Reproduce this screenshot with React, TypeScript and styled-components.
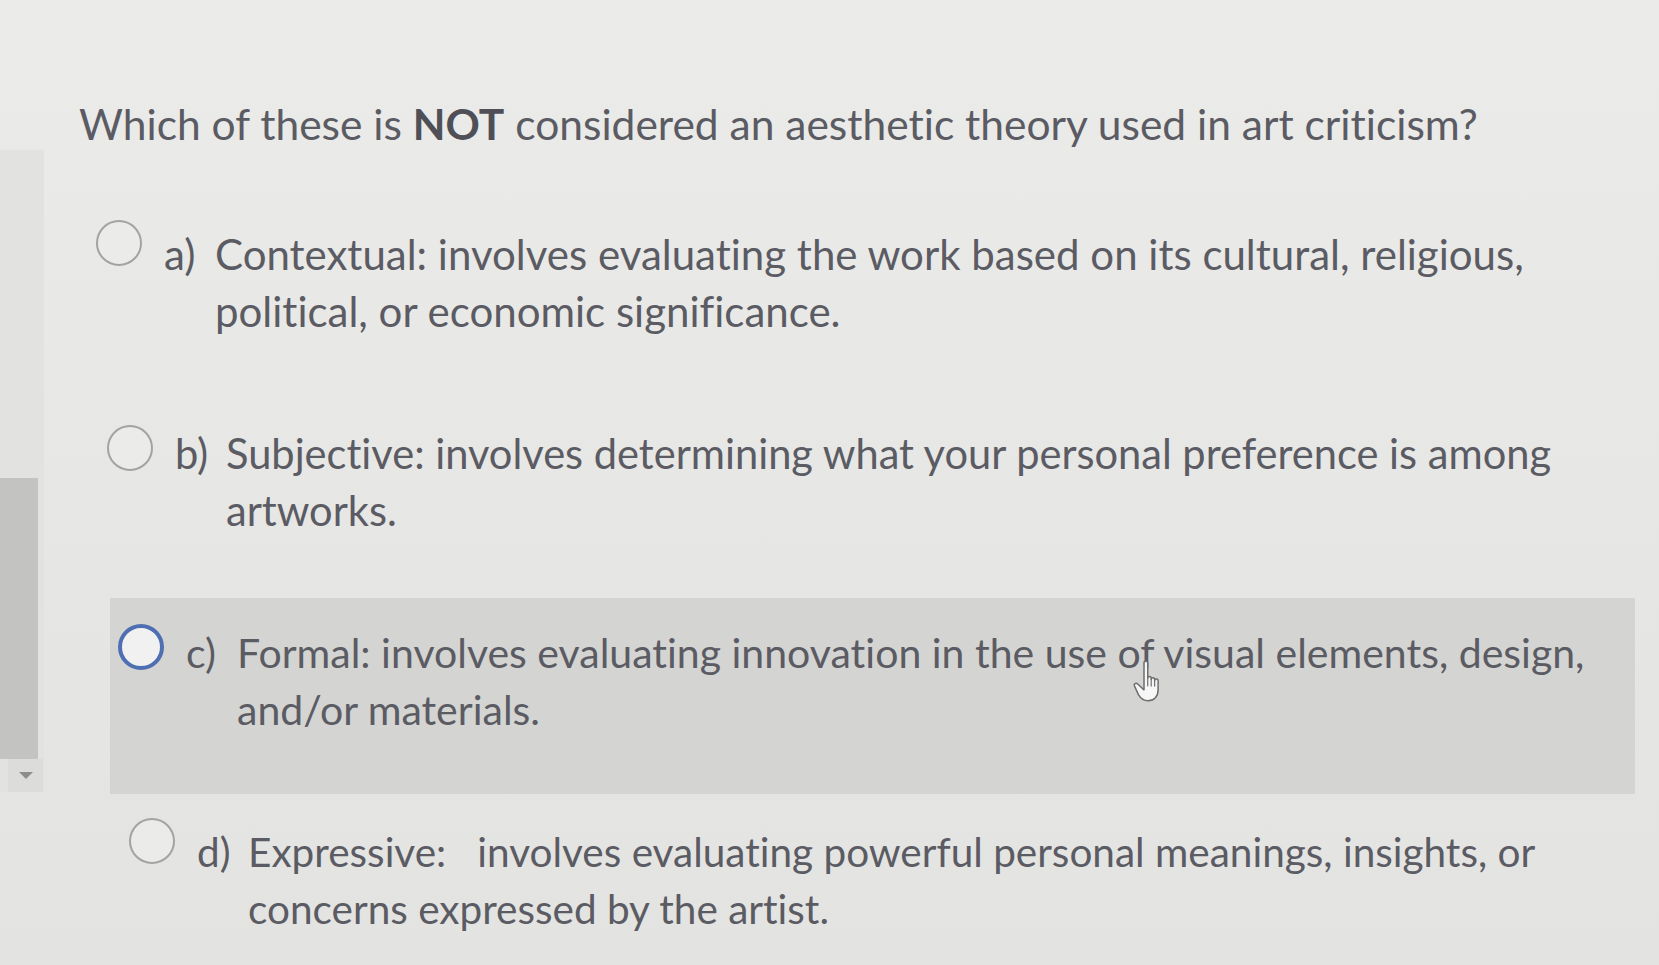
import React from 'react';
import styled, { createGlobalStyle } from 'styled-components';

const GlobalStyle = createGlobalStyle`
  html, body {
    margin: 0;
    padding: 0;
    background: #e7e7e5;
  }
  body {
    font-family: Lato, "Open Sans", sans-serif;
    color: #5b5b63;
    font-variant-ligatures: none;
  }
`;

const Page = styled.div`
  position: relative;
  display: flex;
  width: 1659px;
  height: 965px;
  overflow: hidden;
  background: linear-gradient(180deg, #ebebe9 0%, #e6e6e4 60%, #e3e3e1 100%);
`;

const ScrollColumn = styled.div`
  width: 44px;
  flex: 0 0 44px;
  display: flex;
  flex-direction: column;
`;

const Track = styled.div`
  margin-top: 150px;
  height: 642px;
  background: #e2e2e0;
  display: flex;
  flex-direction: column;
`;

const Thumb = styled.div`
  margin-top: 328px;
  margin-right: 6px;
  height: 281px;
  background: #c3c3c1;
`;

const ArrowBox = styled.div`
  height: 33px;
  margin-left: 8px;
  margin-right: 1px;
  background: #dcdcda;
  display: flex;
  align-items: center;
  justify-content: center;
`;

const ArrowDown = styled.div`
  width: 0;
  height: 0;
  border-left: 7px solid transparent;
  border-right: 7px solid transparent;
  border-top: 7px solid #8d8d8d;
`;

const Content = styled.div`
  flex: 1;
  padding-top: 98px;
  display: flex;
  flex-direction: column;
`;

const Question = styled.h1`
  margin: 0 0 51px 35px;
  font-size: 42.5px;
  font-weight: 400;
  line-height: 1.2;
  white-space: nowrap;
  color: #5b5b63;

  strong {
    font-weight: 700;
    color: #4f4f57;
  }
`;

const OptionList = styled.div`
  display: flex;
  flex-direction: column;
  gap: 3px;
`;

const Option = styled.div<{ $shift: number; $selected?: boolean }>`
  display: flex;
  align-items: flex-start;
  width: 1525px;
  box-sizing: border-box;
  margin-left: ${({ $shift }) => 44 + $shift}px;
  padding: 26px 0 56px 8px;
  background: ${({ $selected }) => ($selected ? '#d4d4d2' : 'transparent')};
`;

const Radio = styled.span<{ $selected?: boolean; $offset: number }>`
  flex: 0 0 auto;
  width: 46px;
  height: 46px;
  box-sizing: border-box;
  border-radius: 50%;
  margin-top: ${({ $offset }) => $offset}px;
  border: ${({ $selected }) => ($selected ? '4px solid #4f6fb3' : '2px solid #a3a3a3')};
  background: ${({ $selected }) => ($selected ? '#f1f1f1' : '#ebebe9')};
`;

const Letter = styled.span<{ $size: number }>`
  flex: 0 0 51px;
  margin-left: 22px;
  font-size: ${({ $size }) => $size}px;
  line-height: 57px;
`;

const Text = styled.div<{ $size: number }>`
  font-size: ${({ $size }) => $size}px;
  line-height: 57px;
`;

const Line = styled.span`
  display: block;
  white-space: nowrap;
`;

const Cursor = styled.svg`
  position: absolute;
  left: 1132px;
  top: 659px;
`;

const HandCursor = () => (
  <Cursor width="36" height="44" viewBox="0 0 24 29">
    <path
      d="M8 2.4c0-1.5 2.5-1.5 2.5 0V12.5c0-1.3 2.3-1.3 2.3 0v.8c0-1.3 2.3-1.3 2.3 0v.8c0-1.3 2.3-1.3 2.3 0V20.5c0 4.2-2.6 7.2-6.7 7.2-3.1 0-4.9-1.5-6.4-4.1L1.7 17.9c-.8-1.3.9-2.7 2.1-1.4L8 20.4V2.4z"
      fill="#f7f7f7"
      stroke="#6e6e6e"
      strokeWidth="1"
      strokeLinejoin="round"
    />
    <path d="M10.5 12.5v5.2M12.8 13.3v4.6M15.1 14.1v3.8" stroke="#6e6e6e" strokeWidth="0.8" strokeLinecap="round" />
  </Cursor>
);

interface Choice {
  letter: string;
  lines: string[];
  shift: number;
  radioOffset: number;
  size: number;
  selected?: boolean;
}

const choices: Choice[] = [
  {
    letter: 'a)',
    lines: [
      'Contextual: involves evaluating the work based on its cultural, religious,',
      'political, or economic significance.',
    ],
    shift: 0,
    radioOffset: -6,
    size: 42,
  },
  {
    letter: 'b)',
    lines: ['Subjective: involves determining what your personal preference is among', 'artworks.'],
    shift: 11,
    radioOffset: 0,
    size: 41.6,
  },
  {
    letter: 'c)',
    lines: ['Formal: involves evaluating innovation in the use of visual elements, design,', 'and/or materials.'],
    shift: 22,
    radioOffset: 0,
    size: 41,
    selected: true,
  },
  {
    letter: 'd)',
    lines: ['Expressive:\u00a0\u00a0 involves evaluating powerful personal meanings, insights, or', 'concerns expressed by the artist.'],
    shift: 33,
    radioOffset: -5,
    size: 40.5,
  },
];

export default function App() {
  return (
    <>
      <GlobalStyle />
      <Page>
        <ScrollColumn>
          <Track>
            <Thumb />
            <ArrowBox>
              <ArrowDown />
            </ArrowBox>
          </Track>
        </ScrollColumn>
        <Content>
          <Question>
            Which of these is <strong>NOT</strong> considered an aesthetic theory used in art criticism?
          </Question>
          <OptionList>
            {choices.map((c) => (
              <Option key={c.letter} $shift={c.shift} $selected={c.selected}>
                <Radio $selected={c.selected} $offset={c.radioOffset} />
                <Letter $size={c.size}>{c.letter}</Letter>
                <Text $size={c.size}>
                  {c.lines.map((l) => (
                    <Line key={l}>{l}</Line>
                  ))}
                </Text>
              </Option>
            ))}
          </OptionList>
        </Content>
        <HandCursor />
      </Page>
    </>
  );
}
